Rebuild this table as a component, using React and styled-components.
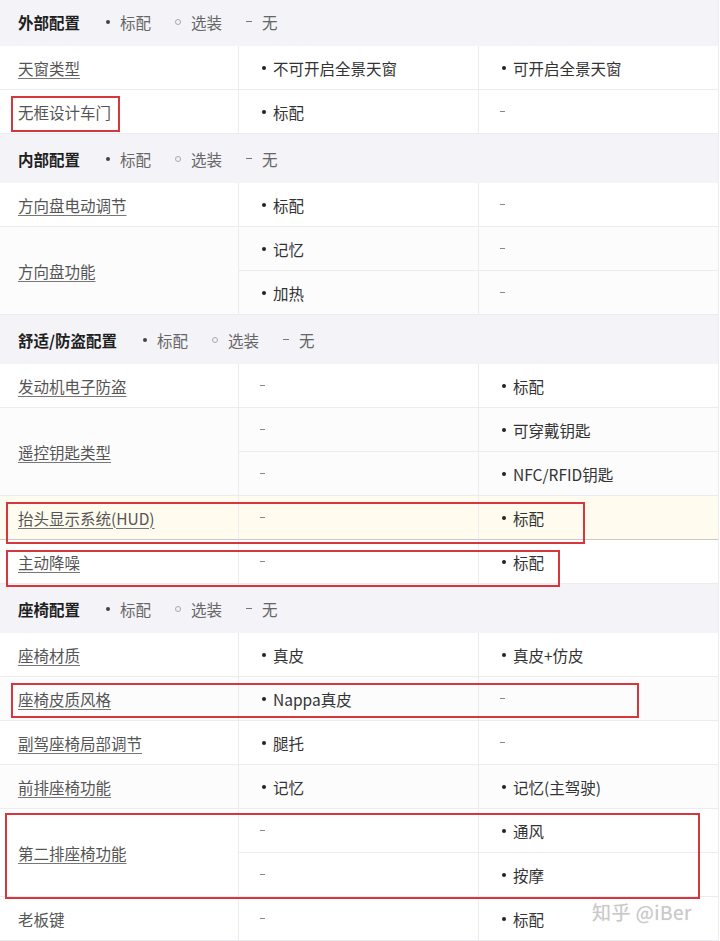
import React from "react";
import styled, { createGlobalStyle } from "styled-components";

const Global = createGlobalStyle`
  html, body { margin: 0; padding: 0; background: #fff; }
  body { font-family: "Noto Sans CJK SC", "Noto Sans", sans-serif; overflow: hidden; }
`;

const Page = styled.div`
  position: relative;
  width: 720px;
  height: 941px;
  overflow: hidden;
`;

const Table = styled.div`
  margin-top: -3px;
  width: 718px;
  border-right: 1px solid #ececf0;
`;

const Header = styled.div`
  height: 49px;
  display: flex;
  align-items: center;
  padding-left: 18px;
  background: #f3f3f8;
  gap: 24px;
  font-size: 15.5px;
`;

const Title = styled.span`
  font-weight: 700;
  color: #1f1f1f;
  margin-right: 2px;
`;

const Legend = styled.span`
  color: #666;
  display: flex;
  align-items: center;
  gap: 6px;
`;

const Mark = styled.span`
  display: inline-block;
  width: ${(p) => (p.kind === "dash" ? "6px" : "4px")};
  height: ${(p) => (p.kind === "dash" ? "1px" : "4px")};
  border-radius: ${(p) => (p.kind === "dash" ? "0" : "50%")};
  background: ${(p) => (p.kind === "dot" ? "#444" : p.kind === "dash" ? "#777" : "transparent")};
  border: ${(p) => (p.kind === "ring" ? "1px solid #aaa" : "none")};
  margin-right: 4px;
`;

const Grid = styled.div`
  display: grid;
  grid-template-columns: 238px 240px 1fr;
  grid-auto-rows: 44px;
`;

const Cell = styled.div`
  display: flex;
  align-items: center;
  font-size: 15.5px;
  color: #333;
  background: ${(p) => p.bg || "#fff"};
  border-bottom: 1px solid ${(p) => p.line || "#ececf0"};
  border-left: ${(p) => (p.first ? "none" : "1px solid #ececf0")};
  padding-left: ${(p) => (p.first ? "18px" : "20px")};
  grid-row: ${(p) => (p.span ? `span ${p.span}` : "auto")};
  box-sizing: border-box;
`;

const Label = styled.span`
  color: #555;
  text-decoration: ${(p) => (p.plain ? "none" : "underline")};
  text-underline-offset: 3px;
  text-decoration-color: #777;
`;

const Bullet = styled.span`
  display: inline-block;
  width: 4px;
  height: 4px;
  border-radius: 50%;
  background: #222;
  margin: 0 7px 0 3px;
`;

const Dash = styled.span`
  display: inline-block;
  width: 5px;
  height: 1px;
  background: #888;
  margin-left: 1px;
`;

const Frame = styled.div`
  position: absolute;
  border: 2px solid #d6363c;
  box-sizing: border-box;
  pointer-events: none;
`;

const Watermark = styled.div`
  position: absolute;
  left: 592px;
  top: 898px;
  font-size: 19px;
  color: rgba(200, 200, 200, 0.95);
  letter-spacing: 0.5px;
  text-shadow: 0 0 1px rgba(160,160,160,0.4);
`;

const Val = ({ v }) =>
  v === "-" ? (
    <Dash />
  ) : (
    <>
      <Bullet />
      {v}
    </>
  );

const sections = [
  {
    title: "外部配置",
    rows: [
      { label: "天窗类型", vals: [["不可开启全景天窗", "可开启全景天窗"]] },
      { label: "无框设计车门", plain: true, vals: [["标配", "-"]] },
    ],
  },
  {
    title: "内部配置",
    rows: [
      { label: "方向盘电动调节", vals: [["标配", "-"]] },
      { label: "方向盘功能", alt: true, vals: [["记忆", "-"], ["加热", "-"]] },
    ],
  },
  {
    title: "舒适/防盗配置",
    rows: [
      { label: "发动机电子防盗", vals: [["-", "标配"]] },
      { label: "遥控钥匙类型", alt: true, vals: [["-", "可穿戴钥匙"], ["-", "NFC/RFID钥匙"]] },
      { label: "抬头显示系统(HUD)", hl: true, vals: [["-", "标配"]] },
      { label: "主动降噪", vals: [["-", "标配"]] },
    ],
  },
  {
    title: "座椅配置",
    rows: [
      { label: "座椅材质", vals: [["真皮", "真皮+仿皮"]] },
      { label: "座椅皮质风格", alt: true, vals: [["Nappa真皮", "-"]] },
      { label: "副驾座椅局部调节", vals: [["腿托", "-"]] },
      { label: "前排座椅功能", alt: true, vals: [["记忆", "记忆(主驾驶)"]] },
      { label: "第二排座椅功能", vals: [["-", "通风"], ["-", "按摩"]] },
      { label: "老板键", plain: true, vals: [["-", "标配"]] },
    ],
  },
];

const frames = [
  { l: 11, t: 96, w: 109, h: 36 },
  { l: 6, t: 502, w: 579, h: 42 },
  { l: 6, t: 550, w: 554, h: 37 },
  { l: 11, t: 683, w: 628, h: 35 },
  { l: 5, t: 813, w: 695, h: 86 },
];

export default function App() {
  return (
    <Page>
      <Global />
      <Table>
        {sections.map((s) => (
          <React.Fragment key={s.title}>
            <Header>
              <Title>{s.title}</Title>
              <Legend><Mark kind="dot" />标配</Legend>
              <Legend><Mark kind="ring" />选装</Legend>
              <Legend><Mark kind="dash" />无</Legend>
            </Header>
            <Grid>
              {s.rows.map((r) => {
                const bg = r.hl ? "#fffbee" : r.alt ? "#fcfcfd" : "#fff";
                const line = r.hl ? "#c9c9c9" : undefined;
                return (
                  <React.Fragment key={r.label}>
                    <Cell first span={r.vals.length} bg={bg} line={line}>
                      <Label plain={r.plain}>{r.label}</Label>
                    </Cell>
                    {r.vals.map((pair, i) => (
                      <React.Fragment key={i}>
                        <Cell bg={bg} line={line}><Val v={pair[0]} /></Cell>
                        <Cell bg={bg} line={line}><Val v={pair[1]} /></Cell>
                      </React.Fragment>
                    ))}
                  </React.Fragment>
                );
              })}
            </Grid>
          </React.Fragment>
        ))}
      </Table>
      {frames.map((f, i) => (
        <Frame key={i} style={{ left: f.l, top: f.t, width: f.w, height: f.h }} />
      ))}
      <Watermark>知乎 @iBer</Watermark>
    </Page>
  );
}
